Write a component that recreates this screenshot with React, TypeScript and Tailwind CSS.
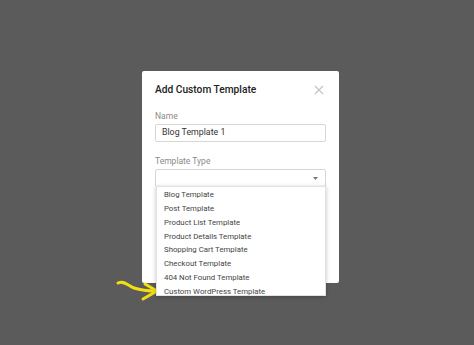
const options = [
  "Blog Template",
  "Post Template",
  "Product List Template",
  "Product Details Template",
  "Shopping Cart Template",
  "Checkout Template",
  "404 Not Found Template",
  "Custom WordPress Template",
];

export default function App() {
  return (
    <div className="relative h-[345px] w-[474px] overflow-hidden bg-[#5b5b5b] pl-[142px] pt-[71px] font-['Roboto',sans-serif]">
      <div className="relative h-[212px] w-[197px] rounded-[2px] bg-white px-[13px] pt-[12px]">
        <div className="flex h-[14px] items-center justify-between">
          <h2 className="text-[10.2px] font-medium leading-[14px] text-[#222]">Add Custom Template</h2>
          <svg width="10" height="10" viewBox="0 0 10 10" className="mr-[2px]">
            <path d="M1 1 L9 9 M9 1 L1 9" stroke="#c2c2c2" strokeWidth="1.1" fill="none" />
          </svg>
        </div>

        <label className="mt-[13px] block text-[8.5px] leading-[12px] text-[#8a8a8a]">Name</label>
        <div className="mt-[2px] flex h-[18px] w-[171px] items-center rounded-[2px] border border-[#d6d6d6] px-[6px] text-[8.8px] text-[#333]">
          Blog Template 1
        </div>

        <label className="mt-[13px] block text-[8.5px] leading-[12px] text-[#8a8a8a]">Template Type</label>
        <div className="relative mt-[2px] flex h-[18px] w-[171px] items-center justify-end rounded-[2px] border border-[#d6d6d6] pr-[7px]">
          <svg width="5" height="3" viewBox="0 0 5 3">
            <path d="M0 0 L5 0 L2.5 3 Z" fill="#777" />
          </svg>
          <ul className="absolute left-0 top-full z-10 h-[110px] w-[170px] overflow-hidden border border-[#e2e2e2] bg-white pt-px shadow-[0_1px_4px_rgba(0,0,0,0.25)]">
            {options.map((o) => (
              <li key={o} className="flex h-[13.85px] items-center pl-[7px] text-[7.8px] text-[#444]">
                {o}
              </li>
            ))}
          </ul>
        </div>
      </div>

      <svg className="absolute left-0 top-0" width="474" height="345" viewBox="0 0 474 345">
        <path
          d="M118 283 C124 280 128 286 134 288 C140 290 148 291 157 291"
          stroke="#f2de14"
          strokeWidth="3"
          fill="none"
          strokeLinecap="round"
        />
        <path
          d="M145 284 L157 291 L143 299"
          stroke="#f2de14"
          strokeWidth="3"
          fill="none"
          strokeLinecap="round"
          strokeLinejoin="round"
        />
      </svg>
    </div>
  );
}
